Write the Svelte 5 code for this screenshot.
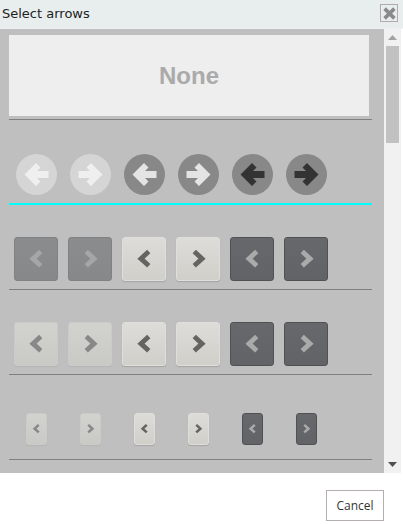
<script>
  const rows = [
    { kind: "circle", cells: ["faint", "faint", "mid", "mid", "deep", "deep"] },
    { kind: "square", cells: ["muted", "muted", "light", "light", "dark", "dark"] },
    { kind: "square", cells: ["pale", "pale", "light", "light", "dark", "dark"] },
    { kind: "small", cells: ["pale", "pale", "light", "light", "dark", "dark"] }
  ];
</script>

<style>
  :global(body) {
    margin: 0;
    background: #fff;
  }

  .dialog {
    display: flex;
    flex-direction: column;
    width: 403px;
    height: 524px;
    overflow: hidden;
    font-family: "DejaVu Sans", sans-serif;
  }

  .title {
    display: flex;
    align-items: center;
    justify-content: space-between;
    box-sizing: border-box;
    height: 29px;
    padding: 0 5px 1px 2px;
    background: #e8eeee;
    border-bottom: 1px solid #eef1f1;
    font-size: 13px;
    color: #222;
  }

  .close {
    display: flex;
    align-items: center;
    justify-content: center;
    box-sizing: border-box;
    width: 18px;
    height: 18px;
    margin-bottom: 1px;
    border: 1px solid #b3abab;
  }

  .body {
    display: flex;
    height: 444px;
  }

  .list {
    box-sizing: border-box;
    width: 384px;
    padding: 6px 12px 0 9px;
    background: #bfbfbf;
    overflow: hidden;
  }

  .row {
    box-sizing: border-box;
    height: 85px;
    padding-top: 24px;
    border-bottom: 1px solid #808080;
  }

  .row.none {
    padding: 0 0 3px;
  }

  .row.selected {
    border-bottom: 2px solid #00ffff;
  }

  .tile {
    display: flex;
    align-items: center;
    justify-content: center;
    width: 360px;
    height: 81px;
    background: #eeeeee;
    font-family: "Liberation Sans", sans-serif;
    font-size: 24px;
    font-weight: 700;
    color: #aaaaaa;
  }

  .cells {
    display: flex;
    height: 60px;
  }

  .cell {
    display: flex;
    align-items: center;
    justify-content: center;
    width: 54px;
  }

  .circle {
    display: flex;
    align-items: center;
    justify-content: center;
    width: 41px;
    height: 41px;
    border-radius: 50%;
  }

  .circle.faint { background: #d5d5d5; color: #efefef; }
  .circle.mid { background: #888888; color: #e4e4e4; }
  .circle.deep { background: #888888; color: #333333; }

  .btn {
    display: flex;
    align-items: center;
    justify-content: center;
    box-sizing: border-box;
    width: 44px;
    height: 44px;
    border-radius: 3px;
    border: 1px solid transparent;
  }

  .btn.small {
    width: 21px;
    height: 32px;
  }

  .btn.muted {
    background: linear-gradient(#8b8c8e, #87888a);
    border-color: #808183;
    color: #a6a6a6;
  }

  .btn.pale {
    background: linear-gradient(#d2d2cf, #c9c9c5);
    border-color: #cbcbc8;
    box-shadow: 0 1px 1px #b4b4b4;
    color: #888888;
  }

  .btn.light {
    background: linear-gradient(#dddcd8, #d0cfca);
    border-color: #dfdedb;
    box-shadow: 0 1px 1px #a3a3a3;
    color: #666460;
  }

  .btn.dark {
    background: linear-gradient(#67686c, #626367);
    border-color: #505155;
    color: #aaaaaa;
  }

  .track {
    display: flex;
    flex-direction: column;
    align-items: center;
    justify-content: space-between;
    box-sizing: border-box;
    width: 17px;
    background: #f1f1f1;
  }

  .thumb {
    width: 13px;
    height: 97px;
    background: #c1c1c1;
  }

  .upper {
    display: flex;
    flex-direction: column;
    align-items: center;
  }

  .stepper {
    display: flex;
    align-items: center;
    justify-content: center;
    height: 17px;
  }

  .edge {
    width: 2px;
    background: #fff;
  }

  .footer {
    display: flex;
    justify-content: flex-end;
    padding: 17px 19px 0 0;
  }

  .cancel {
    box-sizing: border-box;
    width: 58px;
    height: 31px;
    padding: 0;
    border: 1px solid #b5aeb0;
    background: #fff;
    font-family: "Open Sans", sans-serif;
    font-size: 12px;
    color: #333;
  }
</style>

{#snippet chevron(dir, size)}
  <svg width={size} height={size * 1.25} viewBox="0 0 12 15" aria-hidden="true">
    <polyline
      points={dir === 0 ? "9,2.5 3.5,7.5 9,12.5" : "3,2.5 8.5,7.5 3,12.5"}
      fill="none"
      stroke="currentColor"
      stroke-width="3.4" />
  </svg>
{/snippet}

{#snippet arrow(dir)}
  <svg width="25" height="25" viewBox="0 0 25 25" aria-hidden="true">
    <path
      transform={dir === 0 ? "" : "translate(25 0) scale(-1 1)"}
      d="M0.5 12.5 L12 1 L16.5 5.5 L13 9 H24.5 V16 H13 L16.5 19.5 L12 24 Z"
      fill="currentColor" />
  </svg>
{/snippet}

<div class="dialog">
  <div class="title">
    <span>Select arrows</span>
    <div class="close">
      <svg width="13" height="13" viewBox="0 0 12 12" aria-hidden="true">
        <path d="M1.5 1.5 L10.5 10.5 M10.5 1.5 L1.5 10.5" stroke="#8a8a8a" stroke-width="3.4" />
      </svg>
    </div>
  </div>

  <div class="body">
    <div class="list">
      <div class="row none">
        <div class="tile">None</div>
      </div>

      {#each rows as row, r}
        <div class="row" class:selected={r === 0}>
          <div class="cells">
            {#each row.cells as look, i}
              <div class="cell">
                {#if row.kind === "circle"}
                  <div class="circle {look}">{@render arrow(i % 2)}</div>
                {:else if row.kind === "small"}
                  <div class="btn small {look}">{@render chevron(i % 2, 9)}</div>
                {:else}
                  <div class="btn {look}">{@render chevron(i % 2, 17)}</div>
                {/if}
              </div>
            {/each}
          </div>
        </div>
      {/each}
    </div>

    <div class="track">
      <div class="upper">
        <div class="stepper">
          <svg width="9" height="5" viewBox="0 0 9 5" aria-hidden="true"><path d="M0 5 L4.5 0 L9 5 Z" fill="#a3a3a3" /></svg>
        </div>
        <div class="thumb"></div>
      </div>
      <div class="stepper">
        <svg width="9" height="5" viewBox="0 0 9 5" aria-hidden="true"><path d="M0 0 L9 0 L4.5 5 Z" fill="#505050" /></svg>
      </div>
    </div>
    <div class="edge"></div>
  </div>

  <div class="footer">
    <button class="cancel">Cancel</button>
  </div>
</div>
